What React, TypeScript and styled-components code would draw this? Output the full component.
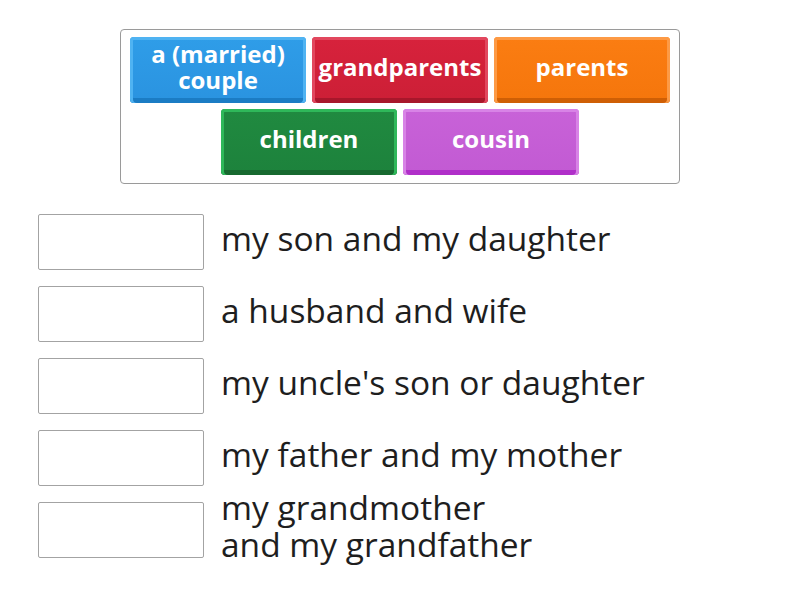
import React from 'react'
import styled, { createGlobalStyle } from 'styled-components'

const Global = createGlobalStyle`
    body {
        margin: 0;
        background: #fff;
        font-family: "Open Sans", "Noto Sans", sans-serif;
        color: #222;
    }
`

const Page = styled.div`
    width: 800px;
    height: 600px;
    display: flex;
    flex-direction: column;
    align-items: center;
    padding-top: 29px;
    box-sizing: border-box;
`

const Bank = styled.div`
    width: 560px;
    box-sizing: border-box;
    border: 1px solid #9a9a9a;
    border-radius: 4px;
    padding: 7px 8px 8px 8px;
    display: flex;
    flex-wrap: wrap;
    justify-content: center;
    gap: 6px;
`

interface TileColors {
    face: string
    faceDark: string
    light: string
    dark: string
}

const Tile = styled.div<{ $c: TileColors }>`
    width: 176px;
    height: 66px;
    box-sizing: border-box;
    border-radius: 4px;
    display: flex;
    align-items: center;
    justify-content: center;
    text-align: center;
    padding-bottom: 6px;
    color: #fff;
    font-weight: 700;
    font-size: 24px;
    line-height: 26px;
    background: linear-gradient(${p => p.$c.face}, ${p => p.$c.faceDark});
    box-shadow:
        inset 0 3px 0 ${p => p.$c.light},
        inset 3px 0 0 ${p => p.$c.light},
        inset -3px 0 0 ${p => p.$c.light},
        inset 0 -5px 0 ${p => p.$c.dark};
`

const TileLabel = styled.span`
    white-space: pre-line;
`

const List = styled.div`
    width: 800px;
    margin-top: 30px;
    padding-left: 38px;
    box-sizing: border-box;
    display: flex;
    flex-direction: column;
    gap: 16px;
`

const Row = styled.div`
    display: flex;
    align-items: center;
    height: 56px;
`

const Slot = styled.div`
    width: 166px;
    height: 56px;
    flex-shrink: 0;
    box-sizing: border-box;
    border: 1px solid #a3a3a3;
    border-radius: 2px;
    background: #fff;
`

const Clue = styled.div`
    margin-left: 17px;
    padding-bottom: 8px;
    font-size: 33.5px;
    line-height: 37px;
    color: #1e1e1e;
    white-space: pre-line;
`

const tiles: { label: string; c: TileColors }[] = [
    { label: 'a (married)\ncouple', c: { face: '#2f9de8', faceDark: '#2a93e0', light: '#4fb3f2', dark: '#1b7cc4' } },
    { label: 'grandparents', c: { face: '#d7223c', faceDark: '#cc1f36', light: '#e2475e', dark: '#a8172b' } },
    { label: 'parents', c: { face: '#fb7d12', faceDark: '#f5760c', light: '#fd9a45', dark: '#cf5f05' } },
    { label: 'children', c: { face: '#208a40', faceDark: '#1d823c', light: '#2fb85a', dark: '#17692f' } },
    { label: 'cousin', c: { face: '#c862d8', faceDark: '#c25ad3', light: '#d883e6', dark: '#b02fc9' } },
]

const clues = [
    'my son and my daughter',
    'a husband and wife',
    "my uncle's son or daughter",
    'my father and my mother',
    'my grandmother\nand my grandfather',
]

export default function App() {
    return (
        <Page>
            <Global />
            <Bank>
                {tiles.map(t => (
                    <Tile key={t.label} $c={t.c}>
                        <TileLabel>{t.label}</TileLabel>
                    </Tile>
                ))}
            </Bank>
            <List>
                {clues.map(c => (
                    <Row key={c}>
                        <Slot />
                        <Clue>{c}</Clue>
                    </Row>
                ))}
            </List>
        </Page>
    )
}
